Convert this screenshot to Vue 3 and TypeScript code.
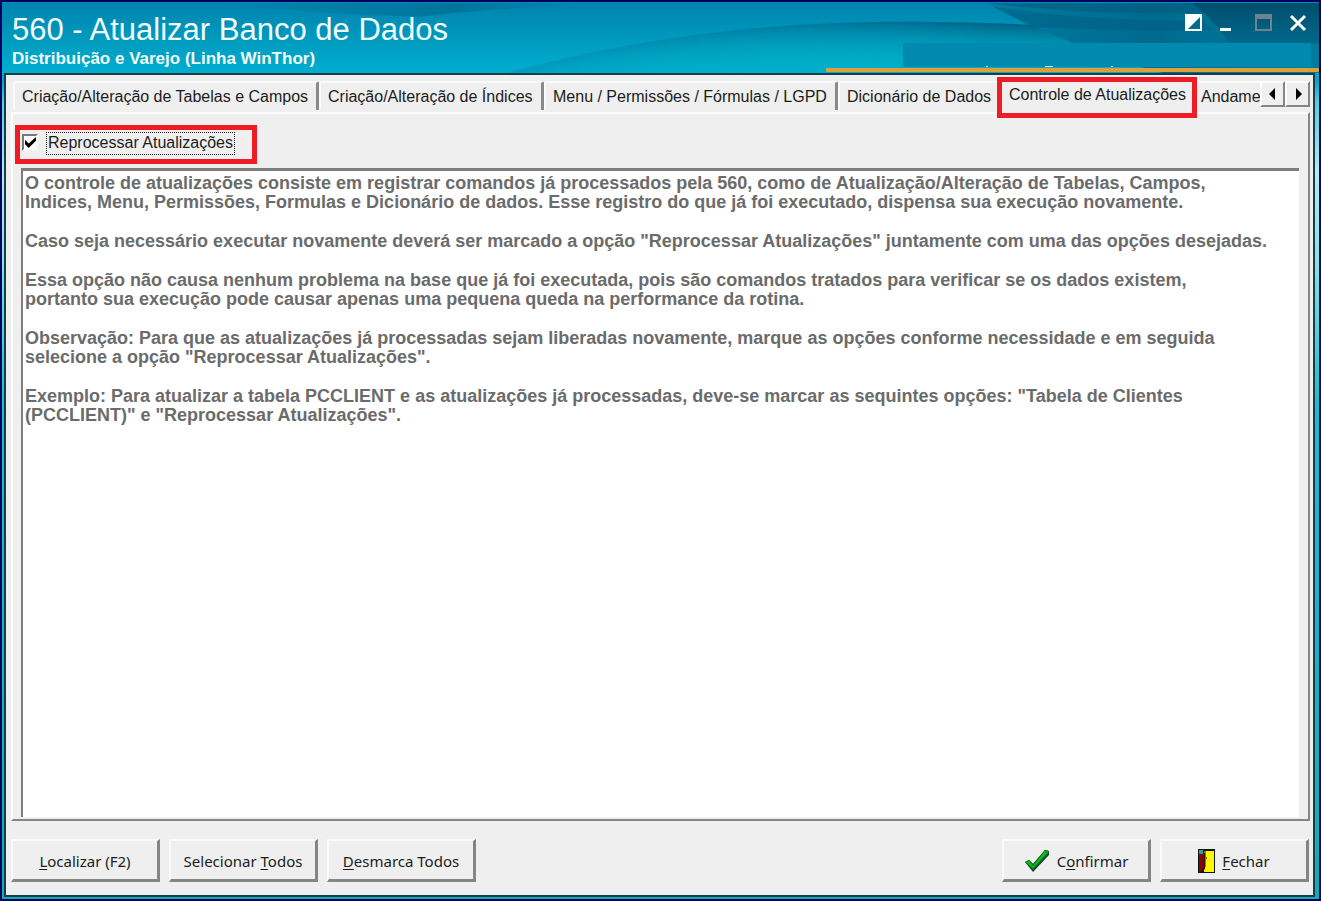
<script setup lang="ts">
import { ref } from 'vue'

const tabs = [
  'Criação/Alteração de Tabelas e Campos',
  'Criação/Alteração de Índices',
  'Menu / Permissões / Fórmulas / LGPD',
  'Dicionário de Dados',
  'Controle de Atualizações',
  'Andame',
]
const active = ref(4)
const reprocess = ref(true)

// Stacked translucent copies of the wave give it a soft falloff under its crest.
const waveLayers = Array.from({ length: 22 }, (_, i) => (i + 1) * 2)

const paragraphs: string[][] = [
  [
    'O controle de atualizações consiste em registrar comandos já processados pela 560, como de Atualização/Alteração de Tabelas, Campos,',
    'Indices, Menu, Permissões, Formulas e Dicionário de dados. Esse registro do que já foi executado, dispensa sua execução novamente.',
  ],
  ['Caso seja necessário executar novamente deverá ser marcado a opção "Reprocessar Atualizações" juntamente com uma das opções desejadas.'],
  [
    'Essa opção não causa nenhum problema na base que já foi executada, pois são comandos tratados para verificar se os dados existem,',
    'portanto sua execução pode causar apenas uma pequena queda na performance da rotina.',
  ],
  [
    'Observação: Para que as atualizações já processadas sejam liberadas novamente, marque as opções conforme necessidade e em seguida',
    'selecione a opção "Reprocessar Atualizações".',
  ],
  [
    'Exemplo: Para atualizar a tabela PCCLIENT e as atualizações já processadas, deve-se marcar as sequintes opções: "Tabela de Clientes',
    '(PCCLIENT)" e "Reprocessar Atualizações".',
  ],
]
</script>

<template>
  <div class="window">
    <div class="frame">
      <header class="banner">
        <svg class="swoosh" viewBox="0 0 1317 72" preserveAspectRatio="none" aria-hidden="true">
          <defs>
            <linearGradient id="base" x1="0" y1="0" x2="0" y2="1">
              <stop offset="0" stop-color="#0084ae" />
              <stop offset="1" stop-color="#00aecd" />
            </linearGradient>
            <linearGradient id="crest" gradientUnits="userSpaceOnUse" x1="504" y1="0" x2="1000" y2="0">
              <stop offset="0" stop-color="#009fc2" />
              <stop offset="0.35" stop-color="#008bb0" />
              <stop offset="0.8" stop-color="#006f96" />
              <stop offset="1" stop-color="#00668a" />
            </linearGradient>
            <linearGradient id="dark" x1="0" y1="0" x2="1" y2="0">
              <stop offset="0" stop-color="#007ba2" />
              <stop offset="0.5" stop-color="#006a8e" />
              <stop offset="1" stop-color="#007c9f" />
            </linearGradient>
            <linearGradient id="top" x1="0" y1="0" x2="1" y2="0">
              <stop offset="0" stop-color="#006f98" stop-opacity="0" />
              <stop offset="0.6" stop-color="#006f98" stop-opacity="0.8" />
              <stop offset="1" stop-color="#0084ae" stop-opacity="0.2" />
            </linearGradient>
            <linearGradient id="corner" x1="0" y1="0" x2="0" y2="1">
              <stop offset="0" stop-color="#004e6c" />
              <stop offset="1" stop-color="#00698c" />
            </linearGradient>
          </defs>
          <rect width="1317" height="72" fill="url(#base)" />
          <path d="M200 0H620Q500 4 420 14Q330 12 200 0Z" fill="url(#top)" />
          <path d="M504 72Q690 19 904 19Q1110 19 1317 55V72Z" fill="url(#crest)" />
          <path
            v-for="dy in waveLayers"
            :key="dy"
            d="M504 72Q690 19 904 19Q1110 19 1317 55V72Z"
            :transform="`translate(0 ${dy})`"
            fill="#00c4de"
            opacity="0.08"
          />
          <path d="M983 0H1317V72H1160Q1080 50 983 0Z" fill="url(#dark)" />
          <path d="M992 4Q1100 20 1200 18L1210 28Q1130 29 1030 25Z" fill="#00587a" opacity="0.4" />
          <path d="M983 0H1190L1205 10Q1100 14 983 0Z" fill="#005878" opacity="0.5" />
          <path d="M1190 0Q1215 20 1228 42H1317V0Z" fill="url(#corner)" />
        </svg>
        <span class="mask"></span>
        <svg class="rule" viewBox="0 0 493 10" preserveAspectRatio="none" aria-hidden="true">
          <rect y="5" width="493" height="4" rx="1" fill="#dba13d" />
          <path d="M160 3h2v1h-2zM219 3h8v1h-8zM285 3h2v1h-2z" fill="#e4f4f6" />
        </svg>
        <div class="titles">
          <h1>560 - Atualizar Banco de Dados</h1>
          <p>Distribuição e Varejo (Linha WinThor)</p>
        </div>
        <div class="controls">
          <button type="button" aria-label="Recolher">
            <svg width="18" height="18" viewBox="0 0 18 18"><rect x="0" y="0" width="17" height="17" fill="#fff" /><path d="M15 3V15H3Z" fill="#006b8e" /></svg>
          </button>
          <button type="button" aria-label="Minimizar">
            <svg width="18" height="18" viewBox="0 0 18 18"><path d="M0 14h11v3H0z" fill="#fff" /></svg>
          </button>
          <button type="button" aria-label="Maximizar" disabled>
            <svg width="18" height="18" viewBox="0 0 18 18"><path d="M0 0h17v17H0zM2 5v10h13V5z" fill="#71818d" fill-rule="evenodd" /></svg>
          </button>
          <button type="button" aria-label="Fechar janela">
            <svg width="18" height="18" viewBox="0 0 18 18"><path d="M1 2L15 16M15 2L1 16" stroke="#fff" stroke-width="3" /></svg>
          </button>
        </div>
      </header>

      <main class="client">
        <div class="tabbar">
          <div class="tabs" role="tablist">
            <button
              v-for="(tab, i) in tabs"
              :key="tab"
              type="button"
              role="tab"
              class="tab"
              :class="{ active: i === active }"
              :aria-selected="i === active"
              @click="active = i"
            >{{ tab }}</button>
          </div>
          <div class="scrollers">
            <button type="button" aria-label="Abas anteriores">
              <svg width="10" height="12" viewBox="0 0 10 12"><path d="M7 0V12L1 6Z" /></svg>
            </button>
            <button type="button" aria-label="Próximas abas">
              <svg width="10" height="12" viewBox="0 0 10 12"><path d="M3 0V12L9 6Z" /></svg>
            </button>
          </div>
        </div>

        <section class="page">
          <div class="option">
            <input id="reprocess" v-model="reprocess" type="checkbox" />
            <svg v-if="reprocess" class="tick" viewBox="0 0 12 12" aria-hidden="true"><path d="M0 3L4 7L12 0V4L4 12L0 8Z" /></svg>
            <label for="reprocess">Reprocessar Atualizações</label>
          </div>
          <div class="memo">
            <p v-for="(lines, i) in paragraphs" :key="i">
              <span v-for="line in lines" :key="line">{{ line }}</span>
            </p>
          </div>
        </section>

        <footer class="actions">
          <button type="button"><span><u>L</u>ocalizar (F2)</span></button>
          <button type="button"><span>Selecionar <u>T</u>odos</span></button>
          <button type="button"><span><u>D</u>esmarca Todos</span></button>
          <button type="button" class="confirm">
            <svg width="26" height="24" viewBox="0 0 26 24" aria-hidden="true">
              <path d="M1 13L5 11L9 15L21 1L25 2V6L9 23Z" fill="#123f3d" />
              <path d="M1 13L5 11L9 15L21 1L25 2L24 5L9 21Z" fill="#087a16" />
              <path d="M2 13L5 12L9 17L21 2L24 3L9 19Z" fill="#16b52a" />
            </svg>
            <span>C<u>o</u>nfirmar</span>
          </button>
          <button type="button">
            <svg width="17" height="24" viewBox="0 0 17 24" aria-hidden="true">
              <rect width="17" height="24" fill="#111" />
              <rect x="6" y="2" width="10" height="21" fill="#fff700" />
              <path d="M1 1H5V4H7V20L3 23H1Z" fill="#7c0808" />
              <path d="M1 1H5V5H1Z" fill="#28a0b0" />
              <path d="M7 2V18L3 23" fill="none" stroke="#111" stroke-width="1" />
              <path d="M7 8h2v2H7z" fill="#8c7200" />
            </svg>
            <span><u>F</u>echar</span>
          </button>
        </footer>
      </main>
    </div>
  </div>
</template>

<style>
html, body { margin: 0; background: #000060; }
</style>

<style scoped>
* { box-sizing: border-box; }
button { font: inherit; color: inherit; margin: 0; padding: 0; border: 0; background: none; }
h1, p { margin: 0; font-weight: inherit; }

.window {
  display: flex;
  min-height: 100vh;
  padding: 2px;
  background: #000060;
  font: 16px/20px "Liberation Sans", Arial, sans-serif;
  color: #1c1c1c;
}
.frame {
  flex: 1;
  min-width: 0;
  display: flex;
  flex-direction: column;
  padding: 0 4px 2px 2px;
  background: linear-gradient(#00a9c9 0, #00a9c9 80px, #4fd0dc 100px, #aeeef2 170px, #7fe6e6 260px, #16c0cc 400px, #12a9b8 100%);
}
.banner {
  position: relative;
  isolation: isolate;
  display: flex;
  justify-content: space-between;
  margin: 0 -4px 0 -2px;
  height: 71px;
  padding: 12px 11px 0 10px;
  color: #f2fcff;
}
.swoosh { position: absolute; z-index: -3; inset: 0; width: 100%; height: 100%; border-top: 1px solid #008fae; }
.mask { position: absolute; z-index: -2; top: 41px; right: 8px; width: 31%; height: 24px; background: #008ab0; }
.rule { position: absolute; z-index: -1; right: 0; bottom: 0; width: 493px; height: 10px; }
.titles h1 { font-size: 31px; line-height: 32px; white-space: nowrap; }
.titles p { font-size: 17px; font-weight: 700; line-height: 25px; white-space: nowrap; }
.controls { display: flex; gap: 17px; }
.controls button { height: 18px; }
.controls svg { display: block; }

.client {
  flex: 1;
  min-width: 0;
  display: flex;
  flex-direction: column;
  padding: 6px 3px 13px 5px;
  border: 2px solid #183c48;
  background: #efefef;
}
.tabbar { display: flex; height: 31px; padding-left: 2px; }
.tabs {
  position: relative;
  z-index: 1;
  flex: 1;
  min-width: 0;
  display: grid;
  grid-template-columns: 306px 225px 294px 159px 200px 1fr;
  height: 41px;
  margin-top: -4px;
  padding-top: 4px;
  overflow: hidden;
}
.tab {
  height: 29px;
  text-align: left;
  white-space: nowrap;
  padding: 0 0 0 7px;
  border: solid #fafafa;
  border-width: 2px 0 0 2px;
  border-right: 3px solid #8a8a8a;
  border-radius: 3px 2px 0 0;
}
.tab:nth-child(4) { border-right: 0; }
.tab:last-child { padding-left: 4px; border: 0; border-top: 2px solid #fafafa; border-radius: 0; }
.tab.active {
  height: 41px;
  margin-top: -4px;
  padding: 0 0 5px 7px;
  border: 5px solid #ee1c25;
  border-radius: 0;
  background: #efefef;
}
.scrollers { display: flex; width: 50px; height: 26px; }
.scrollers button {
  display: grid;
  place-items: center;
  width: 25px;
  border: 2px solid;
  border-color: #fff #858585 #858585 #fff;
}

.page {
  flex: 1;
  display: flex;
  flex-direction: column;
  padding: 11px 9px 2px 8px;
  border: 2px solid;
  border-color: #fcfcfc #858585 #858585 #fcfcfc;
}
.option {
  position: relative;
  display: flex;
  align-items: flex-start;
  gap: 8px;
  align-self: flex-start;
  width: 242px;
  height: 39px;
  margin-left: -6px;
  padding: 2px 0 0 2px;
  border: 5px solid #ee1c25;
}
.option input {
  appearance: none;
  width: 16px;
  height: 17px;
  margin: 2px 0 0;
  border: 2px solid;
  border-color: #777 #f8f8f8 #f8f8f8 #777;
  background: #fff;
}
.tick { position: absolute; left: 5px; top: 7px; width: 11px; height: 11px; pointer-events: none; }
.option label { height: 23px; padding: 0 1px; line-height: 20px; border: 1px dotted #222; white-space: nowrap; }
.memo {
  flex: 1;
  display: flex;
  flex-direction: column;
  gap: 20px;
  margin-top: 4px;
  padding: 3px 2px;
  border: solid #7d7d7d;
  border-width: 3px 0 0 2px;
  background: #fff;
  color: #6b6b6b;
  font-size: 18px;
  font-weight: 700;
  line-height: 19px;
}
.memo span { display: block; }

.actions { display: flex; gap: 9px; margin-top: 18px; padding-right: 1px; }
.actions button {
  display: flex;
  align-items: center;
  justify-content: center;
  gap: 7px;
  width: 149px;
  height: 43px;
  padding-top: 2px;
  border: 2px solid #fafafa;
  border-right: 3px solid #858585;
  border-bottom: 3px solid #858585;
  font: 15px/20px "Noto Sans", Tahoma, sans-serif;
  white-space: nowrap;
}
.actions u { text-underline-offset: 2px; }
.actions .confirm { margin-left: auto; }
</style>
